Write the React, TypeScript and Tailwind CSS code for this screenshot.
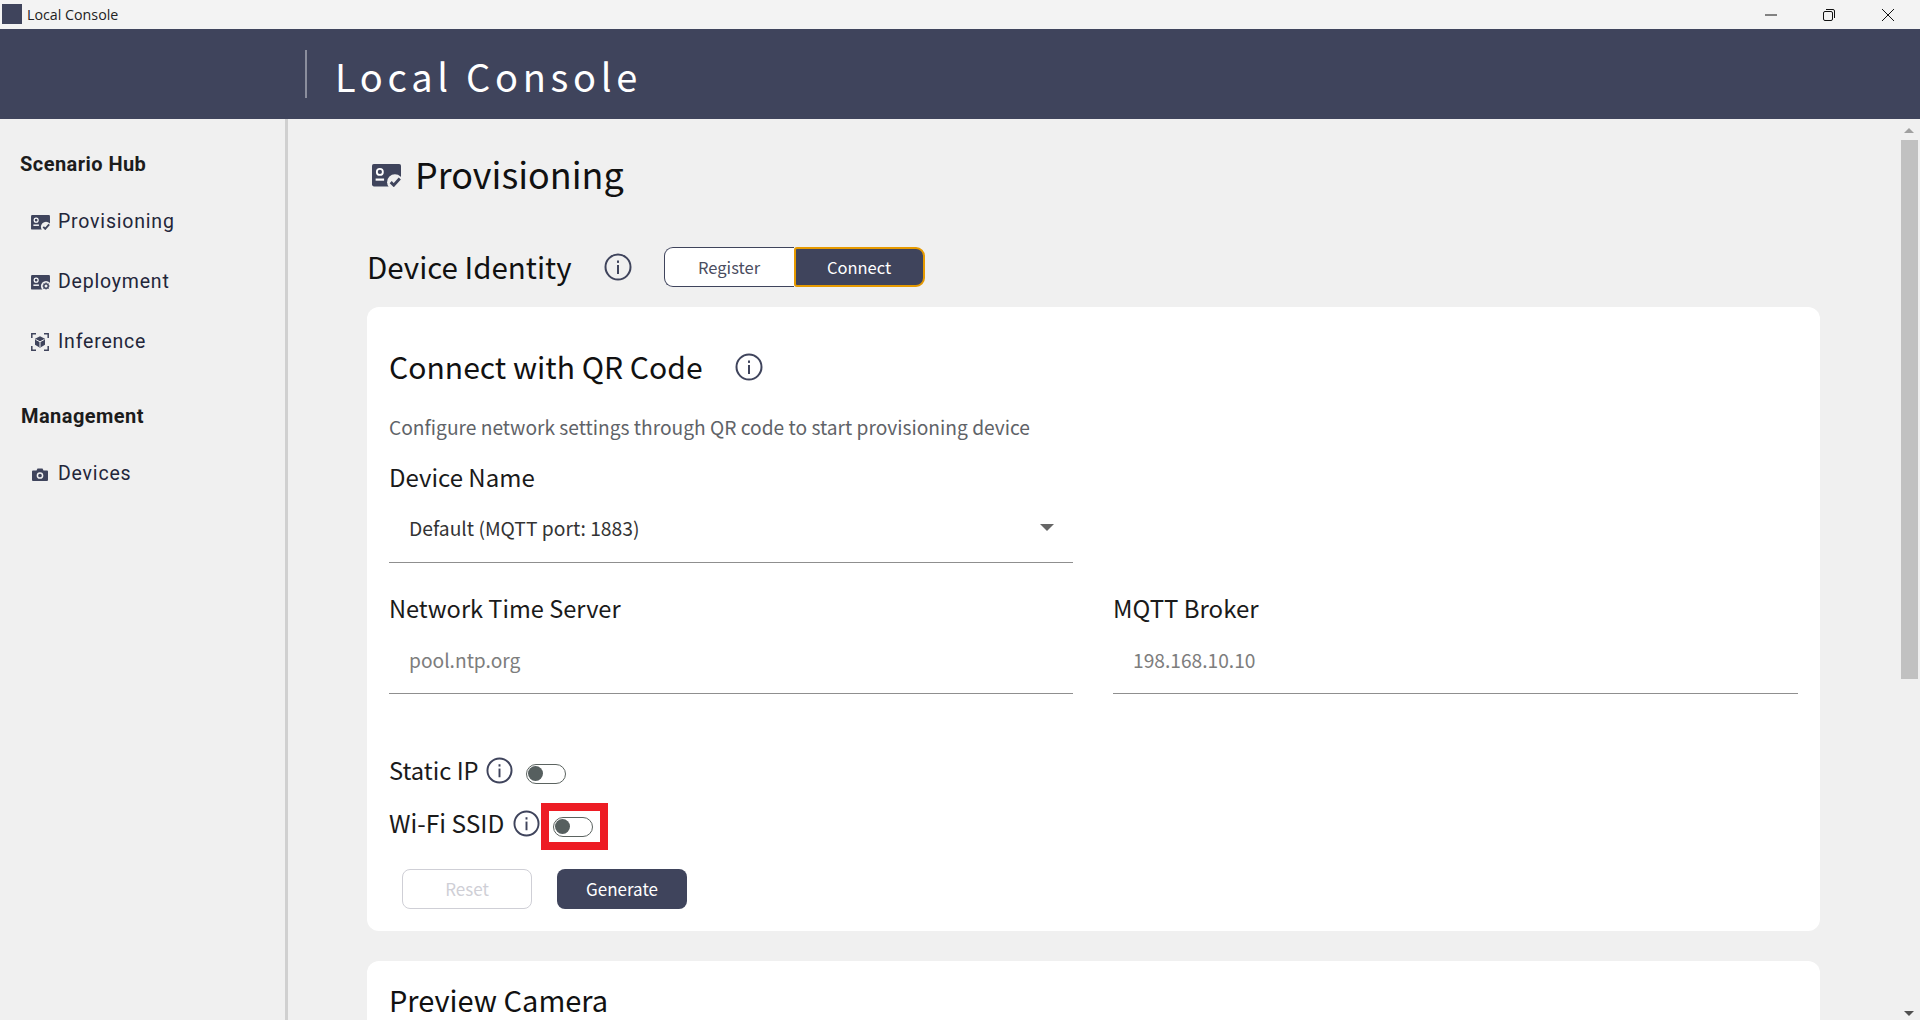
import React from "react";

const NOTO = "font-['Noto_Sans_CJK_JP','Noto_Sans',sans-serif]";

/** Circled "i" used next to headings and labels. */
function InfoIcon({ className }: { className: string }) {
  return (
    <svg viewBox="0 0 28 28" className={className} fill="none" aria-hidden="true">
      <circle cx="14" cy="14" r="12.5" stroke="#3f445c" strokeWidth="2" />
      <rect x="13" y="12" width="2" height="9" fill="#3f445c" />
      <rect x="13" y="7.5" width="2" height="2.4" fill="#3f445c" />
    </svg>
  );
}

function ProvisionIcon({ className }: { className: string }) {
  return (
    <svg viewBox="0 0 24 19" className={className} aria-hidden="true">
      <rect x="0" y="0" width="24" height="18.500" rx="1.500" fill="#3f445c" />
      <circle cx="6.500" cy="6.500" r="2.500" fill="none" stroke="#fff" strokeWidth="1.500" />
      <rect x="3" y="12" width="7" height="1.800" fill="#fff" />
      <circle cx="19" cy="15" r="6.500" fill="#f0f0f0" />
      <path d="M15.500 15l2.500 2.500 5-5.500" fill="none" stroke="#3f445c" strokeWidth="2.400" />
    </svg>
  );
}

function DeployIcon({ className }: { className: string }) {
  return (
    <svg viewBox="0 0 24 19" className={className} aria-hidden="true">
      <rect x="0" y="0" width="24" height="18.500" rx="1.500" fill="#3f445c" />
      <circle cx="6.500" cy="6.500" r="2.500" fill="none" stroke="#fff" strokeWidth="1.500" />
      <rect x="3" y="12" width="7" height="1.800" fill="#fff" />
      <circle cx="19" cy="14" r="6.500" fill="#f0f0f0" />
      <circle cx="19" cy="14" r="2.800" fill="none" stroke="#3f445c" strokeWidth="1.800" />
      <path d="M19 9.500v2M19 16.500v2M14.500 14h2M21.500 14h2M15.800 10.800l1.400 1.400M20.800 15.800l1.400 1.400M15.800 17.200l1.400-1.400M20.800 12.200l1.400-1.400" stroke="#3f445c" strokeWidth="1.400" />
    </svg>
  );
}

function InferenceIcon({ className }: { className: string }) {
  return (
    <svg viewBox="0 0 18 18" className={className} fill="none" aria-hidden="true">
      <path d="M.8 5V.8h4.200M13 .8h4.200V5M17.200 13v4.200H13M5 17.200H.8V13" stroke="#3f445c" strokeWidth="1.500" />
      <path d="M9 3.200l5 2.500v6L9 14.800l-5-3.100v-6z" fill="#3f445c" />
      <path d="M4.500 6.400L9 8.800l4.500-2.400M9 8.800v5.500" stroke="#f0f0f0" strokeWidth="1" />
    </svg>
  );
}

function CameraIcon({ className }: { className: string }) {
  return (
    <svg viewBox="0 0 16 13" className={className} aria-hidden="true">
      <path d="M1 2.500h3.500L5.500 .5h5l1 2H15a1 1 0 0 1 1 1V12a1 1 0 0 1-1 1H1a1 1 0 0 1-1-1V3.500a1 1 0 0 1 1-1z" fill="#3f445c" />
      <circle cx="8" cy="7.500" r="2.600" fill="none" stroke="#f0f0f0" strokeWidth="1.500" />
    </svg>
  );
}

function Toggle() {
  return (
    <span className="flex h-[20px] w-[40px] items-center rounded-full border border-[#5b6360] bg-white pl-[1px]">
      <span className="h-[15px] w-[15px] rounded-full bg-[#565f5f]" />
    </span>
  );
}

function NavItem({ icon, label }: { icon: React.ReactNode; label: string }) {
  return (
    <div className="flex h-[60px] items-center pl-[31px]">
      <span className="flex w-[26px] items-center">{icon}</span>
      <span className="ml-[1px] font-['Roboto',sans-serif] text-[19.500px] tracking-[0.8px] text-[#23263a]">{label}</span>
    </div>
  );
}

function TextField({ label, value, labelSize, className }: { label: string; value: string; labelSize: string; className: string }) {
  return (
    <div className={className}>
      <div className={`${labelSize} leading-[34px] text-[#1a1a1a]`}>{label}</div>
      <div className="mt-[7px] flex h-[62px] items-center border-b-[1.500px] border-[#8f8f8f] pb-[6px] pl-[20px] text-[19.200px] leading-[28px] text-[#7d7d7d]">
        {value}
      </div>
    </div>
  );
}

export default function App() {
  return (
    <div className={`flex h-[1020px] flex-col overflow-hidden bg-[#f0f0f0] ${NOTO}`}>
      {/* Window title bar */}
      <div className="flex h-[29px] shrink-0 items-center bg-[#f3f3f3]">
        <span className="ml-[2px] mt-[-1px] h-[20px] w-[20px] bg-[#3f445c]" />
        <span className="ml-[5px] font-['Open_Sans',sans-serif] text-[14.250px] text-[#222]">Local Console</span>
        <div className="ml-auto flex items-center">
          <svg viewBox="0 0 12 12" className="mr-[46px] h-[12px] w-[12px]" aria-hidden="true">
            <path d="M0 6h12" stroke="#111" strokeWidth="1" />
          </svg>
          <svg viewBox="0 0 12 12" className="mr-[47px] h-[12px] w-[12px]" fill="none" aria-hidden="true">
            <rect x="0.500" y="2.500" width="9" height="9" rx="1.500" stroke="#111" />
            <path d="M3 .5h7a1.500 1.500 0 0 1 1.500 1.500v7" stroke="#111" />
          </svg>
          <svg viewBox="0 0 12 12" className="mr-[26px] h-[12px] w-[12px]" aria-hidden="true">
            <path d="M0 0l12 12M12 0L0 12" stroke="#111" strokeWidth="1" />
          </svg>
        </div>
      </div>

      {/* App header */}
      <header className="flex h-[90px] shrink-0 items-center bg-[#3f445c] pl-[305px]">
        <span className="h-[48px] w-[2px] bg-[#8b8e9d]" />
        <span className="ml-[28px] mt-[3px] text-[38px] leading-[56px] tracking-[4.700px] text-white">Local Console</span>
      </header>

      <div className="flex min-h-0 flex-1">
        {/* Sidebar */}
        <aside className="w-[288px] shrink-0 border-r-[3px] border-[#d0d0d0]">
          <div className="pl-[20px] pt-[30px] font-['Roboto',sans-serif] text-[20px] font-bold leading-[30px] tracking-[0.45px] text-[#1c1c1c]">Scenario Hub</div>
          <div className="mt-[13px]">
            <NavItem icon={<ProvisionIcon className="h-[15px] w-[19px]" />} label="Provisioning" />
            <NavItem icon={<DeployIcon className="h-[15px] w-[19px]" />} label="Deployment" />
            <NavItem icon={<InferenceIcon className="h-[18px] w-[18px]" />} label="Inference" />
          </div>
          <div className="mt-[29px] pl-[21px] font-['Roboto',sans-serif] text-[20px] font-bold leading-[30px] tracking-[0.45px] text-[#1c1c1c]">Management</div>
          <div className="mt-[13px]">
            <NavItem icon={<CameraIcon className="ml-[1px] h-[13px] w-[16px]" />} label="Devices" />
          </div>
        </aside>

        {/* Main content */}
        <main className="relative min-w-0 flex-1 pl-[79px] pr-[100px]">
          <div className="flex h-[96px] items-center pl-[5px] pt-[16px]">
            <ProvisionIcon className="h-[23px] w-[29px]" />
            <h1 className="mb-[4px] ml-[14px] text-[35.900px] font-normal leading-[52px] text-[#111]">Provisioning</h1>
          </div>

          <div className="mt-[22px] flex h-[60px] items-center">
            <h2 className="mb-[2px] text-[29.500px] font-normal leading-[44px] text-[#111]">Device Identity</h2>
            <InfoIcon className="ml-[32px] h-[28px] w-[28px]" />
            <div className="ml-[32px] flex h-[40px] text-[16.500px]">
              <span className="flex w-[130px] items-center justify-center rounded-l-[9px] border border-r-0 border-[#3f445c] bg-white text-[#4a4d60]">Register</span>
              <span className="flex w-[131px] items-center justify-center rounded-r-[9px] rounded-l-[3px] border-2 border-[#e69a00] bg-[#3f445c] text-white">Connect</span>
            </div>
          </div>

          {/* QR card */}
          <section className="mt-[10px] h-[624px] rounded-[12px] bg-white px-[22px]">
            <div className="box-content flex h-[60px] items-center pt-[30px]">
              <h2 className="mb-[2px] text-[30.100px] font-normal leading-[40px] text-[#111]">Connect with QR Code</h2>
              <InfoIcon className="ml-[32px] h-[28px] w-[28px]" />
            </div>
            <p className="mt-[15px] text-[19.200px] leading-[30px] text-[#5f6368]">Configure network settings through QR code to start provisioning device</p>
            <div className="mt-[18px] text-[24px] leading-[34px] text-[#1a1a1a]">Device Name</div>
            <div className="mt-[7px] flex h-[62px] w-[684px] items-center justify-between border-b-[1.500px] border-[#8f8f8f] pb-[8px] pl-[20px] pr-[19px] text-[19.300px] leading-[28px] text-[#333]">
              Default (MQTT port: 1883)
              <span className="h-0 w-0 border-x-[7px] border-t-[7px] border-x-transparent border-t-[#666]" />
            </div>
            <div className="mt-[28px] flex gap-[40px]">
              <TextField label="Network Time Server" labelSize="text-[23.600px]" value="pool.ntp.org" className="w-[684px]" />
              <TextField label="MQTT Broker" labelSize="text-[24px]" value="198.168.10.10" className="w-[685px]" />
            </div>
            <div className="mt-[59px] flex h-[34px] items-center">
              <span className="text-[23.700px] leading-[34px] text-[#1a1a1a]">Static IP</span>
              <InfoIcon className="ml-[7px] h-[27px] w-[27px]" />
              <span className="ml-[13px] mt-[7px]"><Toggle /></span>
            </div>
            <div className="mt-[19px] flex h-[34px] items-center">
              <span className="text-[24.500px] leading-[34px] text-[#1a1a1a]">Wi-Fi SSID</span>
              <InfoIcon className="ml-[9px] h-[27px] w-[27px]" />
              {/* Red annotation box around the toggle */}
              <span className="ml-[1px] mt-[7px] flex h-[47px] w-[67px] items-center border-[8px] border-[#ed1c24] pl-[4px]"><Toggle /></span>
            </div>
            <div className="ml-[13px] mt-[29px] flex gap-[25px] text-[17px]">
              <span className="flex h-[40px] w-[130px] items-center justify-center rounded-[8px] border border-[#cfcfd6] text-[#cfcfd6]">Reset</span>
              <span className="flex h-[40px] w-[130px] items-center justify-center rounded-[8px] bg-[#3f445c] text-white">Generate</span>
            </div>
          </section>

          {/* Next card, cut off by the window */}
          <section className="mt-[30px] h-[200px] rounded-[12px] bg-white px-[22px] pt-[18px]">
            <h2 className="text-[29px] font-normal leading-[40px] text-[#111]">Preview Camera</h2>
          </section>

          {/* Scrollbar */}
          <div className="absolute inset-y-0 right-0 flex w-[21px] flex-col items-center pr-[1px]">
            <span className="mt-[9px] h-0 w-0 border-x-[5px] border-b-[5px] border-x-transparent border-b-[#a0a0a0]" />
            <span className="mt-[7px] h-[539px] w-[17px] bg-[#c1c1c1]" />
            <span className="mt-auto mb-[4px] h-0 w-0 border-x-[5px] border-t-[5px] border-x-transparent border-t-[#505050]" />
          </div>
        </main>
      </div>
    </div>
  );
}
